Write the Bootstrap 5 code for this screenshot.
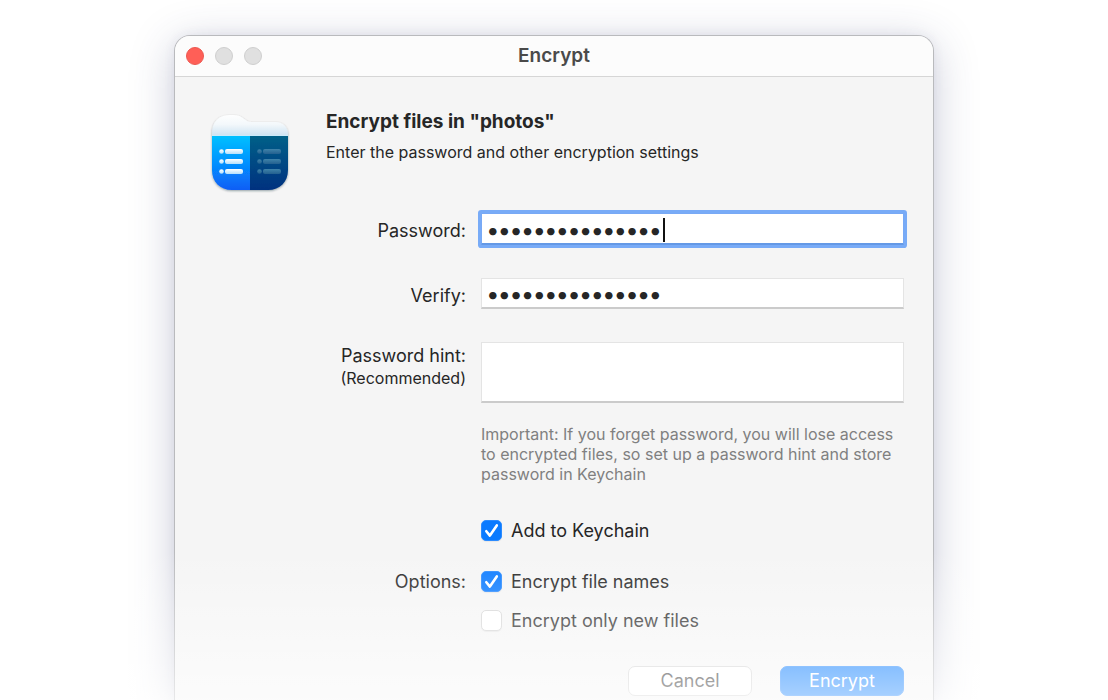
<!DOCTYPE html>
<html lang="en">
<head>
<meta charset="utf-8">
<meta name="viewport" content="width=device-width, initial-scale=1">
<title>Encrypt</title>
<link href="https://cdn.jsdelivr.net/npm/bootstrap@5.3.0/dist/css/bootstrap.min.css" rel="stylesheet">
<style>
body{font-family:Inter,"Liberation Sans",sans-serif;font-size:18px;line-height:24px;color:#262626;background:#fff}
.stage{padding-top:35px}
.dialog-window{width:100%;max-width:760px;background:#f5f5f5;border:1px solid #b9babd;border-bottom:0;border-radius:16px 16px 0 0;box-shadow:0 8px 44px rgba(50,60,110,.25),0 0 12px rgba(50,60,110,.07)}
.titlebar{height:41px;padding:0 11px;background:#fcfcfc;border-bottom:1px solid #d6d6d6;border-radius:15px 15px 0 0}
.titlebar h1{font-size:19px;font-weight:600;color:#4a4a4a}
.lights{gap:11px;width:90px}
.lights button{width:18px;height:18px;padding:0;border-radius:50%;background:#e0e0e0;border:1px solid #cfcfcf}
.lights .close-light{background:#ff5f57;border-color:#ec5850}
.content{padding:32px 29px 4px 35px}
.intro{gap:36px;height:100px}
.intro-text{padding-top:1px}
.intro h2{font-size:19px;line-height:24px;font-weight:700}
.note,.intro p,.hint-sub{font-size:16px;line-height:20px}
.note{color:#808080;margin:21px 0 33px}
.fields{grid-template-columns:minmax(0,256px) minmax(0,1fr);column-gap:15px}
.row-label{padding-top:2px}
.row-label-inset{padding-top:6px}
.field-row{margin-bottom:33px}
.field{border:1px solid #e4e4e4;border-bottom:2px solid #cbcbcb;border-radius:0;background:#fff;padding:2px 5px 0;font-family:Lato,sans-serif;font-size:20px;line-height:24px;height:31px;color:#262626;resize:none}
.field:focus{border-color:#e4e4e4;box-shadow:none}
.field.active-field{height:32px;border-color:#78a9f5;border-bottom-color:#6499e6;border-radius:1px;box-shadow:0 0 0 3px #78abf7;outline:0;caret-color:transparent}
.caret{left:182px;top:5px;width:2px;height:24px;background:#111}
.field.hint-field{height:61px}
.opt{gap:9px;min-height:26px}
.opt label{padding-top:2px}
.opt-group{margin-bottom:25px}
.opt-item{margin-bottom:13px}
.opt .form-check-input{width:21px;height:21px;border-radius:5px;border:1px solid #d6d6d6;margin:0;background-color:#fff;background-size:21px;background-position:center;box-shadow:0 1px 1px rgba(0,0,0,.06)}
.opt .form-check-input:checked{background-color:#0a7aff;border-color:#2b8bff;background-image:url("data:image/svg+xml,%3Csvg xmlns='http://www.w3.org/2000/svg' viewBox='0 0 21 21'%3E%3Cpath fill='none' stroke='%23fff' stroke-width='2.6' stroke-linecap='round' stroke-linejoin='round' d='M5.3 11.2l3.6 4.4L15.8 5.4'/%3E%3C/svg%3E")}
.actions{gap:28px;margin-top:33px}
.actions .btn{width:124px;height:30px;padding:0;font-size:18px;line-height:26px;border-radius:7px}
.cancel-btn{background:#fff;border:1px solid #d2d2d2;color:#262626}
.encrypt-btn{background:#0a7dff;border:1px solid #1c84ff;color:#fff}
.bottom-fade{height:150px;pointer-events:none;background:linear-gradient(rgba(255,255,255,0),rgba(255,255,255,.66))}
</style>
</head>
<body>
<div class="stage d-flex flex-column align-items-center min-vh-100 position-relative overflow-hidden">
<main class="dialog-window flex-grow-1">
  <header class="titlebar d-flex align-items-center">
    <div class="lights d-flex">
      <button type="button" class="close-light" aria-label="Close"></button>
      <button type="button" aria-label="Minimize"></button>
      <button type="button" aria-label="Zoom"></button>
    </div>
    <h1 class="flex-grow-1 text-center m-0">Encrypt</h1>
    <div class="lights"></div>
  </header>
  <form class="content">
    <div class="intro d-flex">
      <svg class="flex-shrink-0" width="80" height="84" viewBox="0 0 80 84" aria-hidden="true">
        <defs>
          <linearGradient id="top" x1="0" y1="0" x2="0" y2="1"><stop offset="0" stop-color="#fff"/><stop offset=".45" stop-color="#f3f8fb"/><stop offset="1" stop-color="#c9e0f1"/></linearGradient>
          <linearGradient id="left" x1="0" y1="0" x2="0" y2="1"><stop offset="0" stop-color="#00c0ff"/><stop offset=".5" stop-color="#0590ff"/><stop offset="1" stop-color="#0a5cf5"/></linearGradient>
          <linearGradient id="right" x1="0" y1="0" x2="0" y2="1"><stop offset="0" stop-color="#026088"/><stop offset="1" stop-color="#04307f"/></linearGradient>
          <linearGradient id="bar" x1="0" y1="0" x2="0" y2="1"><stop offset="0" stop-color="#fff"/><stop offset="1" stop-color="#b5e0fc"/></linearGradient>
          <linearGradient id="dim" x1="0" y1="0" x2="0" y2="1"><stop offset="0" stop-color="#3f83aa"/><stop offset="1" stop-color="#23608f"/></linearGradient>
          <filter id="soft" x="-20%" y="-20%" width="140%" height="150%"><feDropShadow dx="0" dy="1" stdDeviation=".8" flood-color="#123" flood-opacity=".4"/></filter>
          <clipPath id="folder"><path d="M2 25C2 12 9 6 20 6h3C34 6 34 13 42 13h24c7 0 12 5 12 12v36c0 12-8 20-20 20H22C10 81 2 73 2 61z"/></clipPath>
        </defs>
        <g filter="url(#soft)"><g clip-path="url(#folder)">
          <path fill="url(#top)" d="M0 5h80v23H0z"/>
          <path fill="url(#left)" d="M0 27h40v55H0z"/>
          <path fill="url(#right)" d="M40 27h40v55H40z"/>
          <path stroke="#c9f2ff" stroke-opacity=".5" d="M0 26.5h80"/>
        </g></g>
        <g fill="url(#bar)"><circle cx="11.500" cy="42.500" r="2.300"/><rect x="15" y="40" width="18" height="5" rx="2"/><circle cx="11.500" cy="52.500" r="2.300"/><rect x="15" y="50" width="18" height="5" rx="2"/><circle cx="11.500" cy="62.500" r="2.300"/><rect x="15" y="60" width="18" height="5" rx="2"/></g>
        <g fill="url(#dim)"><circle cx="49.500" cy="42.500" r="2.300"/><rect x="53" y="40" width="18" height="5" rx="2"/><circle cx="49.500" cy="52.500" r="2.300"/><rect x="53" y="50" width="18" height="5" rx="2"/><circle cx="49.500" cy="62.500" r="2.300"/><rect x="53" y="60" width="18" height="5" rx="2"/></g>
      </svg>
      <div class="intro-text">
        <h2 class="mb-2">Encrypt files in "photos"</h2>
        <p class="m-0">Enter the password and other encryption settings</p>
      </div>
    </div>
    <div class="d-grid fields">
      <label class="text-end row-label-inset mt-1" for="pw">Password:</label>
      <div class="position-relative mt-1 field-row">
        <input class="form-control field active-field" type="password" id="pw" value="abcdefghijklmno">
        <span class="caret position-absolute"></span>
      </div>
      <label class="text-end row-label-inset" for="verify">Verify:</label>
      <div class="field-row"><input class="form-control field" type="password" id="verify" value="abcdefghijklmno"></div>
      <label class="text-end row-label" for="hint">Password hint:<span class="d-block hint-sub">(Recommended)</span></label>
      <div>
        <textarea class="form-control field hint-field" id="hint"></textarea>
        <p class="note">Important: If you forget password, you will lose access to encrypted files, so set up a password hint and store password in Keychain</p>
      </div>
      <div></div>
      <div class="opt opt-group d-flex align-items-center"><input class="form-check-input" type="checkbox" id="keychain" checked><label for="keychain">Add to Keychain</label></div>
      <div class="text-end row-label" id="options">Options:</div>
      <div role="group" aria-labelledby="options">
        <div class="opt opt-item d-flex align-items-center"><input class="form-check-input" type="checkbox" id="names" checked><label for="names">Encrypt file names</label></div>
        <div class="opt d-flex align-items-center"><input class="form-check-input" type="checkbox" id="newfiles"><label for="newfiles">Encrypt only new files</label></div>
      </div>
    </div>
    <div class="actions d-flex justify-content-end">
      <button type="button" class="btn cancel-btn">Cancel</button>
      <button type="submit" class="btn encrypt-btn">Encrypt</button>
    </div>
  </form>
</main>
<div class="bottom-fade position-absolute bottom-0 start-0 end-0"></div>
</div>
<script src="https://cdn.jsdelivr.net/npm/bootstrap@5.3.0/dist/js/bootstrap.bundle.min.js"></script>
</body>
</html>
